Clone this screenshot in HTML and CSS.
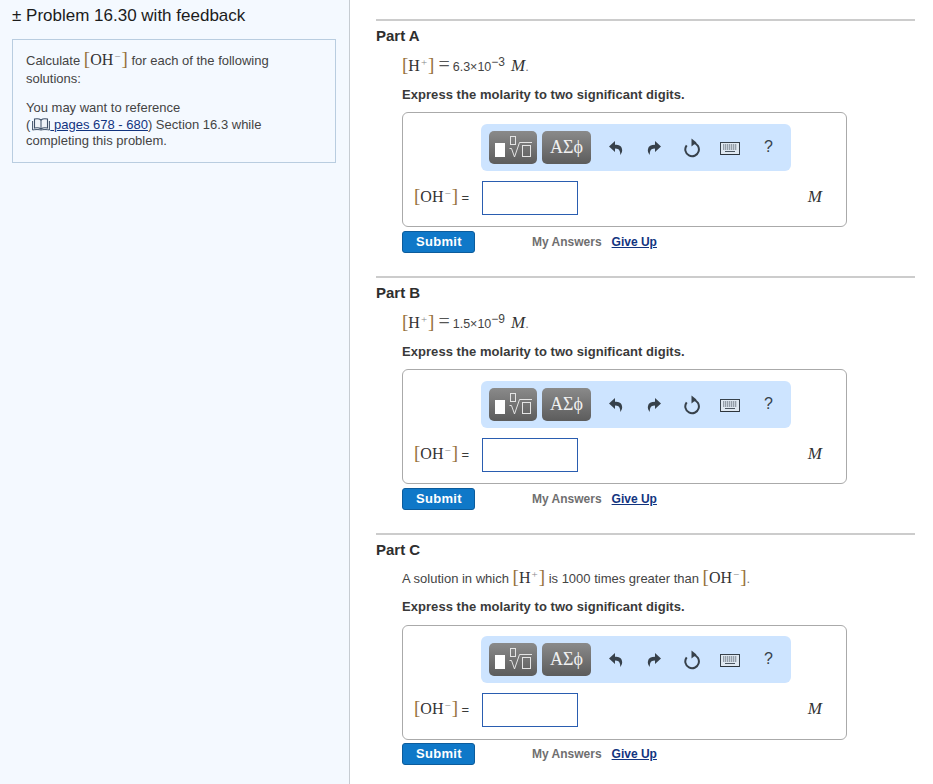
FILE: index.html
```html
<!DOCTYPE html>
<html lang="en">
<head>
<meta charset="utf-8">
<title>Problem 16.30 with feedback</title>
<link rel="stylesheet" href="styles.css">
</head>
<body>
<svg class="defs" width="0" height="0" aria-hidden="true">
  <symbol id="i-templates" viewBox="0 0 48 33">
    <rect x="6" y="12" width="10" height="14" fill="#fff"/>
    <g fill="none" stroke="#e4e4e4" stroke-width="1">
      <rect x="21.500" y="5.500" width="5" height="8"/>
      <rect x="33.500" y="14.500" width="8" height="11"/>
      <path d="M20.500 17.500h2l3 8.500 5-14.500h12.500"/>
    </g>
  </symbol>
  <symbol id="i-undo" viewBox="0 0 16 18">
    <path d="M7 2 1 7.500 7 13V9.500c3 0 4.500 1 5 3.500.3 1 .3 2 0 3 2-2 2.500-4 2-6C13.500 7 11 5.800 7 5.800z" fill="#37414b"/>
  </symbol>
  <symbol id="i-redo" viewBox="0 0 16 18">
    <path d="M9 2l6 5.500L9 13V9.500c-3 0-4.500 1-5 3.500-.3 1-.3 2 0 3-2-2-2.500-4-2-6C2.500 7 5 5.800 9 5.800z" fill="#37414b"/>
  </symbol>
  <symbol id="i-reset" viewBox="0 0 18 20">
    <path d="M10 4.700A6.800 6.800 0 1 1 3.700 7.300" fill="none" stroke="#37414b" stroke-width="2"/>
    <path d="M8.500 0.500 13.500 4.500 8.500 8.500z" fill="#37414b"/>
  </symbol>
  <symbol id="i-keyboard" viewBox="0 0 20 13">
    <rect x="0.500" y="0.500" width="19" height="12" fill="#dfe8f1" stroke="#37414b"/>
    <path d="M3 3h14M3 5h14M3 7h14" stroke="#4a5560" stroke-width="1" stroke-dasharray="1.300 .7"/>
    <path d="M5 9.500h10" stroke="#4a5560" stroke-width="1"/>
    <path d="M1 12.500h18" stroke="#2c343c" stroke-width="1"/>
  </symbol>
  <symbol id="i-book" viewBox="0 0 18 13">
    <path d="M2.500 1c2.800-.6 5-.3 6.500 1 1.500-1.300 3.700-1.600 6.500-1v9c-2.800-.6-5-.3-6.500 1-1.500-1.300-3.700-1.600-6.500-1z" fill="#eef2f8" stroke="#3f5068" stroke-width="1.100"/>
    <path d="M9 2v9M.6 3v9c3-.6 6-.6 8.400 0 2.400-.6 5.400-.6 8.400 0V3" fill="none" stroke="#3f5068"/>
  </symbol>
</svg>

<div class="page">
  <aside class="side">
    <h1 class="title">± Problem 16.30 with feedback</h1>
    <div class="intro">
      <p class="intro-p">Calculate <span class="math"><span class="br">[</span>OH<sup class="sup">−</sup><span class="br">]</span></span> for each of the following solutions:</p>
      <p class="intro-ref">You may want to reference<br>(<a class="ref" href="#"><svg class="book"><use href="#i-book"/></svg> pages 678 - 680</a>) Section 16.3 while<br>completing this problem.</p>
    </div>
  </aside>

  <main class="parts">
    <section class="part">
      <h2 class="part-title">Part A</h2>
      <div class="body">
        <p class="given"><span class="math"><span class="br">[</span>H<sup class="sup">+</sup><span class="br">]</span><span class="eq">=</span></span><span class="num">6.3×10</span><sup class="exp">−3</sup><i class="unit">M</i><span class="dot">.</span></p>
        <p class="instr">Express the molarity to two significant digits.</p>
        <div class="answer">
          <div class="tools">
            <div class="toolbar">
              <span class="tbtn"><svg class="tpl"><use href="#i-templates"/></svg></span>
              <span class="tbtn greek">ΑΣϕ</span>
              <span class="ticons">
                <svg class="ic"><use href="#i-undo"/></svg>
                <svg class="ic ic-2"><use href="#i-redo"/></svg>
                <svg class="ic-r"><use href="#i-reset"/></svg>
                <svg class="ic-k"><use href="#i-keyboard"/></svg>
                <span class="help">?</span>
              </span>
            </div>
          </div>
          <div class="entry">
            <span class="label"><span class="math"><span class="br">[</span>OH<sup class="sup">−</sup><span class="br">]</span></span> =</span>
            <span class="field"></span>
            <i class="m">M</i>
          </div>
        </div>
        <div class="actions">
          <span class="submit">Submit</span>
          <span class="my">My Answers</span>
          <a class="give" href="#">Give Up</a>
        </div>
      </div>
    </section>

    <section class="part">
      <h2 class="part-title">Part B</h2>
      <div class="body">
        <p class="given"><span class="math"><span class="br">[</span>H<sup class="sup">+</sup><span class="br">]</span><span class="eq">=</span></span><span class="num">1.5×10</span><sup class="exp">−9</sup><i class="unit">M</i><span class="dot">.</span></p>
        <p class="instr">Express the molarity to two significant digits.</p>
        <div class="answer">
          <div class="tools">
            <div class="toolbar">
              <span class="tbtn"><svg class="tpl"><use href="#i-templates"/></svg></span>
              <span class="tbtn greek">ΑΣϕ</span>
              <span class="ticons">
                <svg class="ic"><use href="#i-undo"/></svg>
                <svg class="ic ic-2"><use href="#i-redo"/></svg>
                <svg class="ic-r"><use href="#i-reset"/></svg>
                <svg class="ic-k"><use href="#i-keyboard"/></svg>
                <span class="help">?</span>
              </span>
            </div>
          </div>
          <div class="entry">
            <span class="label"><span class="math"><span class="br">[</span>OH<sup class="sup">−</sup><span class="br">]</span></span> =</span>
            <span class="field"></span>
            <i class="m">M</i>
          </div>
        </div>
        <div class="actions">
          <span class="submit">Submit</span>
          <span class="my">My Answers</span>
          <a class="give" href="#">Give Up</a>
        </div>
      </div>
    </section>

    <section class="part part-c">
      <h2 class="part-title">Part C</h2>
      <div class="body">
        <p class="given">A solution in which <span class="math"><span class="br">[</span>H<sup class="sup">+</sup><span class="br">]</span></span> is 1000 times greater than <span class="math"><span class="br">[</span>OH<sup class="sup">−</sup><span class="br">]</span></span><span class="dot">.</span></p>
        <p class="instr">Express the molarity to two significant digits.</p>
        <div class="answer">
          <div class="tools">
            <div class="toolbar">
              <span class="tbtn"><svg class="tpl"><use href="#i-templates"/></svg></span>
              <span class="tbtn greek">ΑΣϕ</span>
              <span class="ticons">
                <svg class="ic"><use href="#i-undo"/></svg>
                <svg class="ic ic-2"><use href="#i-redo"/></svg>
                <svg class="ic-r"><use href="#i-reset"/></svg>
                <svg class="ic-k"><use href="#i-keyboard"/></svg>
                <span class="help">?</span>
              </span>
            </div>
          </div>
          <div class="entry">
            <span class="label"><span class="math"><span class="br">[</span>OH<sup class="sup">−</sup><span class="br">]</span></span> =</span>
            <span class="field"></span>
            <i class="m">M</i>
          </div>
        </div>
        <div class="actions">
          <span class="submit">Submit</span>
          <span class="my">My Answers</span>
          <a class="give" href="#">Give Up</a>
        </div>
      </div>
    </section>
  </main>
</div>
</body>
</html>
```
FILE: styles.css
```css
* { box-sizing: border-box; }
html, body { margin: 0; padding: 0; background: #fff; }
body { font-family: "Liberation Sans", Arial, sans-serif; font-size: 13px; color: #3a3a3a; overflow: hidden; }
.defs { position: absolute; }
.page { display: flex; width: 933px; height: 784px; overflow: hidden; }

.side { flex: 0 0 350px; background: #f4f9ff; border-right: 1px solid #c6ccd2; padding: 5px 13px 0 12px; }
.title { margin: 0 0 13px; font-size: 17px; font-weight: 400; line-height: 21px; color: #1c1c1c; white-space: nowrap; }
.intro { border: 1px solid #b9cde0; padding: 11px 13px 0 13px; width: 324px; height: 124px; color: #444; }
.intro-p { margin: 0 0 12px; line-height: 18px; }
.intro-ref { margin: 0; line-height: 16.500px; white-space: nowrap; }
.ref { color: #12347f; }
.book { width: 18px; height: 13px; margin-left: 2px; vertical-align: -2px; }

.math { font-family: "Liberation Serif", "Times New Roman", serif; font-size: 16px; color: #333; }
.br { color: #96703a; font-size: 19px; line-height: 0; }
.sup { font-size: 11px; line-height: 0; vertical-align: 5px; color: #8a8a8a; padding: 0 1px; }
.eq { margin: 0 3px 0 4px; color: #555; font-size: 20px; line-height: 0; }

.parts { flex: 1; padding: 19px 18px 0 26px; }
.part { border-top: 2px solid #ccc; height: 257px; }
.part-title { margin: 0; padding-top: 7px; font-size: 15px; line-height: 16px; color: #2e2e2e; }
.body { padding-left: 26px; }
.given { margin: 10px 0 0; height: 23px; line-height: 23px; white-space: nowrap; color: #444; }
.num { font-size: 12.500px; color: #444; }
.exp { font-size: 12px; line-height: 0; vertical-align: 5px; }
.unit { font-family: "Liberation Serif", serif; font-size: 17px; margin-left: 6px; color: #333; }
.dot { color: #777; }
.instr { margin: 10px 0 0; font-size: 13px; font-weight: 700; line-height: 16px; color: #3a3a3a; letter-spacing: .05px; }

.answer { margin-top: 9px; width: 445px; height: 115px; border: 1px solid #aaa; border-radius: 6px; background: #fff; }
.tools { display: flex; padding: 11px 0 0 78px; }
.toolbar { display: flex; align-items: center; width: 310px; height: 47px; background: #cde4ff; border-radius: 6px; padding-left: 8px; gap: 5px; }
.tbtn { display: flex; align-items: center; justify-content: center; width: 48px; height: 33px; border-radius: 5px; background: linear-gradient(#8a8a8a, #5c5c5c); }
.tpl { width: 48px; height: 33px; }
.greek { width: 49px; color: #f0f0f0; font-family: "Liberation Serif", serif; font-size: 18px; }
.ticons { display: flex; align-items: center; margin-left: 12px; }
.ic { width: 16px; height: 18px; margin-right: 22px; }
.ic-2 { margin-right: 21px; }
.ic-r { width: 18px; height: 20px; margin-right: 19px; }
.ic-k { width: 20px; height: 13px; margin: 2px 24px 0 0; }
.help { color: #37414b; font-size: 16px; margin-bottom: 2px; }

.entry { display: flex; align-items: center; margin-top: 10px; padding-left: 11px; height: 34px; }
.label { width: 68px; white-space: nowrap; margin-bottom: 3px; }
.field { width: 96px; height: 34px; border: 1px solid #2a5db0; background: #fff; }
.m { margin: 0 24px 2px auto; font-family: "Liberation Serif", serif; font-size: 17px; color: #333; }

.actions { display: flex; align-items: center; margin-top: 4px; height: 22px; font-size: 12px; font-weight: 700; }
.submit { display: flex; align-items: center; justify-content: center; width: 73px; height: 22px; border: 1px solid #0c5c9c; border-radius: 3px; background: #0f78c8; color: #fff; font-size: 13px; letter-spacing: .3px; padding: 0 0 2px 1px; margin-right: 57px; }
.my { color: #6f6f6f; margin-right: 10px; }
.give { color: #12347f; }

.part-c .given { margin-top: 8px; }
.part-c .answer { margin-top: 10px; }
.part-c .tools { padding-top: 10px; }
.part-c .actions { margin-top: 3px; }
```
